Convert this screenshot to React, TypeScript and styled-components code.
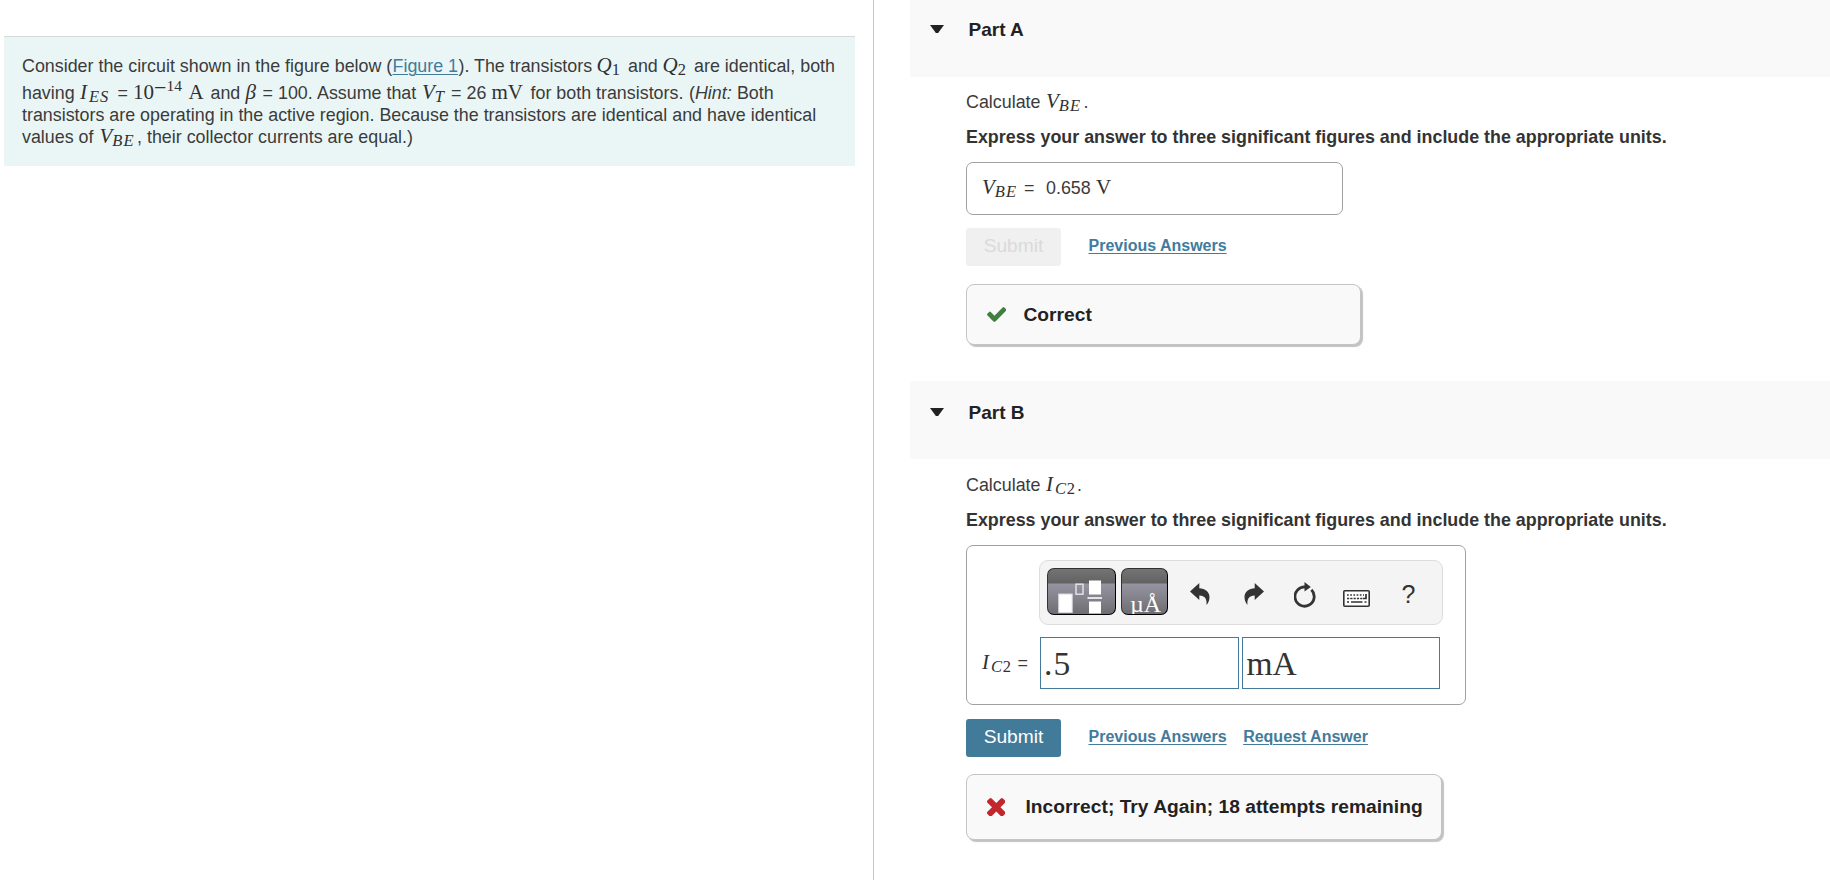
import React from "react";
import styled, { createGlobalStyle, css } from "styled-components";

const GlobalStyle = createGlobalStyle`
  * { box-sizing: border-box; }
  body { margin: 0; background: #fff; overflow: hidden; }
`;

const sans = `"Liberation Sans", Arial, sans-serif`;
const serif = `"Liberation Serif", "Times New Roman", serif`;

const Page = styled.div`
  display: grid;
  grid-template-columns: 873px 1px 1fr;
  height: 880px;
  font-family: ${sans};
  font-size: 17.86px;
  line-height: 22px;
  color: #3b3b3b;
`;

const Divider = styled.div`
  background: #bcc8d4;
`;

const LeftPane = styled.section`
  padding: 36px 18px 0 4px;
`;

const Problem = styled.div`
  height: 130px;
  padding: 18px 0 0 18px;
  border-top: 1px solid #d8dada;
  background: #eaf6f6;
`;

const Line = styled.div<{ $gap?: number }>`
  display: flex;
  align-items: baseline;
  height: 22px;
  margin-bottom: ${(p) => p.$gap ?? 0}px;
  white-space: pre;
`;

/* A run of words; $w is the advance to the next run on the line. */
const Run = styled.span<{ $w?: number; $italic?: boolean }>`
  flex: none;
  width: ${(p) => (p.$w ? `${p.$w}px` : "auto")};
  font-style: ${(p) => (p.$italic ? "italic" : "normal")};
`;

const Sym = styled.span<{ $w?: number; $upright?: boolean }>`
  flex: none;
  width: ${(p) => (p.$w ? `${p.$w}px` : "auto")};
  font-family: ${serif};
  font-size: 21px;
  line-height: 0;
  font-style: ${(p) => (p.$upright ? "normal" : "italic")};
  color: #303030;
`;

const Sub = styled.span<{ $upright?: boolean; $track?: number; $gap?: number }>`
  margin-left: ${(p) => p.$gap ?? 0}px;
  font-size: 16.5px;
  line-height: 0;
  vertical-align: -3px;
  letter-spacing: ${(p) => p.$track ?? 0}px;
  font-style: ${(p) => (p.$upright ? "normal" : "italic")};
`;

const Sup = styled.span`
  font-size: 15.5px;
  line-height: 0;
  vertical-align: 8px;
`;

const SupMinus = styled.span`
  font-size: 22px;
  line-height: 0;
  vertical-align: 4px;
`;

const FigureLink = styled.a`
  flex: none;
  width: 66px;
  color: #427b9b;
  text-decoration: underline;
  text-decoration-thickness: 1px;
  text-underline-offset: 2px;
`;

const RightPane = styled.main`
  padding-left: 36px;
`;

const PartHeader = styled.header<{ $height: number; $top: number }>`
  display: flex;
  align-items: flex-start;
  height: ${(p) => p.$height}px;
  padding: ${(p) => p.$top}px 0 0 20px;
  background: #f9f9f9;
`;

const Caret = styled.span`
  width: 14px;
  height: 8px;
  margin-top: 6px;
  background: #222;
  clip-path: polygon(0 0, 100% 0, 58% 100%, 42% 100%);
`;

const PartTitle = styled.h2`
  margin: 0 0 0 24.5px;
  font-size: 19px;
  line-height: 22px;
  color: #222;
`;

const PartBody = styled.div<{ $top: number; $height: number }>`
  height: ${(p) => p.$height}px;
  padding: ${(p) => p.$top}px 0 0 56px;
`;

const Instruction = styled.p`
  margin: 13px 0 0;
  font-weight: bold;
  color: #333;
  white-space: nowrap;
`;

const frame = css`
  border: 1px solid #a0a0a0;
  border-radius: 7px;
  background: #fff;
`;

const AnswerBox = styled.div`
  ${frame}
  width: 377px;
  height: 53px;
  margin-top: 14px;
  padding: 14px 0 0 15px;
`;

const EditorBox = styled.div`
  ${frame}
  width: 500px;
  height: 160px;
  margin-top: 14px;
  padding: 14px 0 0 15px;
`;

const Actions = styled.div<{ $top: number }>`
  display: flex;
  align-items: flex-start;
  margin-top: ${(p) => p.$top}px;
`;

const SubmitButton = styled.button`
  width: 95px;
  height: 38px;
  padding: 0;
  border: 0;
  border-radius: 3px;
  background: #427a9a;
  color: #fff;
  font: 19.2px/35px ${sans};
  padding-bottom: 3px;
  &:disabled {
    background: #f0f0f0;
    color: #dadada;
  }
`;

const ActionLink = styled.a<{ $left: number }>`
  margin: 7px 0 0 ${(p) => p.$left}px;
  font-size: 16px;
  font-weight: bold;
  color: #427b9b;
  text-decoration: underline;
  text-decoration-thickness: 1px;
  text-underline-offset: 2px;
`;

const Feedback = styled.div<{ $w: number; $h: number; $top: number }>`
  display: flex;
  align-items: center;
  width: ${(p) => p.$w}px;
  height: ${(p) => p.$h}px;
  margin-top: ${(p) => p.$top}px;
  padding-left: 19.5px;
  border: 1px solid #c4c4c4;
  border-radius: 8px;
  background: #f9f9f9;
  box-shadow: 2px 2px 1px #c2c2c2;
`;

const FeedbackText = styled.span<{ $left: number }>`
  margin-left: ${(p) => p.$left}px;
  font-size: 19.2px;
  font-weight: bold;
  letter-spacing: 0.03px;
  color: #222;
  white-space: nowrap;
`;

const Toolbar = styled.div`
  display: flex;
  align-items: flex-start;
  width: 404px;
  height: 65px;
  margin-left: 57px;
  padding: 7px 0 0 7px;
  border: 1px solid #dcdcdc;
  border-radius: 9px;
  background: #f4f4f4;
`;

const Palette = styled.button<{ $w: number }>`
  flex: none;
  width: ${(p) => p.$w}px;
  height: 47px;
  margin: 0 5px 0 0;
  padding: 0;
  overflow: hidden;
  border: 1px solid #333;
  border-right-color: #000;
  border-bottom-color: #000;
  border-radius: 7px;
  background: linear-gradient(#747474 0, #626262 14px, #9694a0 15px, #6e6d72 100%);
  color: #fff;
  font: 24px/24px ${serif};
  svg { display: block; }
`;

const UnitGlyphs = styled.span`
  display: block;
  padding: 23px 0 0 2px;
`;

const ToolIcon = styled.span<{ $left: number; $top: number }>`
  flex: none;
  margin: ${(p) => p.$top}px 0 0 ${(p) => p.$left}px;
  font-size: 25px;
  line-height: 26px;
  color: #333;
  svg { display: block; }
`;

const EntryRow = styled.div`
  display: flex;
  align-items: flex-start;
  padding-top: 12px;
`;

const EntryLabel = styled(Line)`
  flex: none;
  width: 58px;
  padding-top: 15px;
`;

const Entry = styled.div<{ $w: number; $pad: number; $track?: number }>`
  flex: none;
  width: ${(p) => p.$w}px;
  height: 52px;
  margin-right: 3px;
  padding-left: ${(p) => p.$pad}px;
  border: 1px solid #427b9b;
  font: 33.5px/51px ${serif};
  letter-spacing: ${(p) => p.$track ?? 0}px;
  color: #333;
`;

const CheckIcon = () => (
  <svg width="19.4" height="15" viewBox="121 334 1550 1188" fill="#3f8040">
    <path d="M1671 566q0 40-28 68l-724 724-136 136q-28 28-68 28t-68-28l-136-136-362-362q-28-28-28-68t28-68l136-136q28-28 68-28t68 28l294 295 656-657q28-28 68-28t68 28l136 136q28 28 28 68z" />
  </svg>
);

const CrossIcon = () => (
  <svg width="18.5" height="18.5" viewBox="302 366 1188 1188" fill="#c1272d">
    <path d="M1490 1322q0 40-28 68l-136 136q-28 28-68 28t-68-28l-294-294-294 294q-28 28-68 28t-68-28l-136-136q-28-28-28-68t28-68l294-294-294-294q-28-28-28-68t28-68l136-136q28-28 68-28t68 28l294 294 294-294q28-28 68-28t68 28l136 136q28 28 28 68t-28 68l-294 294 294 294q28 28 28 68z" />
  </svg>
);

const TemplatesIcon = () => (
  <svg width="67" height="45" viewBox="0 0 67 45">
    <rect x="10.7" y="25" width="13.5" height="18.5" fill="#fff" stroke="#d8d8dc" />
    <rect x="28" y="15.2" width="7" height="10" fill="none" stroke="#e0e0e4" strokeWidth="1.5" />
    <rect x="41" y="11.5" width="12" height="14" fill="#fff" />
    <rect x="39.500" y="28" width="14.500" height="2" fill="#e4e4e8" />
    <rect x="41" y="32.500" width="12" height="12" fill="#fff" />
  </svg>
);

const curl = "M0 8.5 9.3 0V5.2C15 5.4 19.5 8.5 19.5 14c0 3.2-1 5.8-3 8 .6-6-1.5-9.3-7.2-9.5V17Z";

const UndoIcon = () => (
  <svg width="20" height="23" viewBox="0 0 20 23" fill="#333"><path d={curl} /></svg>
);

const RedoIcon = () => (
  <svg width="20" height="23" viewBox="0 0 20 23" fill="#333"><path d={curl} transform="matrix(-1 0 0 1 20 0)" /></svg>
);

const ResetIcon = () => (
  <svg width="22" height="26" viewBox="0 0 22 26">
    <path d="M11.5 5A9.6 9.6 0 1 0 17.4 7.8" fill="none" stroke="#333" strokeWidth="2.8" />
    <path d="M10.5 0 16.8 4.9 10.5 9.5Z" fill="#333" />
  </svg>
);

const KeyboardIcon = () => (
  <svg width="27" height="17" viewBox="0 0 27 17">
    <rect x="0.8" y="0.8" width="25.4" height="15.4" rx="1" fill="#fff" stroke="#333" strokeWidth="1.6" />
    <g stroke="#333" strokeWidth="1.7">
      <path d="M4 5H21" strokeDasharray="1.7 1.5" />
      <path d="M4 8.5H20" strokeDasharray="2.2 1.1" />
      <path d="M20 8.5H23V4" fill="none" />
      <path d="M4 12H6M8 12H19.5M21.5 12H23.5" />
    </g>
  </svg>
);

const VBE = ({ w }: { w?: number }) => (
  <Sym $w={w}>V<Sub $track={1}>BE</Sub></Sym>
);

const IC2 = ({ w }: { w?: number }) => (
  <Sym $w={w}>I<Sub $gap={2} $track={0.8}>C</Sub><Sub $upright>2</Sub></Sym>
);

const prompt = "Express your answer to three significant figures and include the appropriate units.";

export default function App() {
  return (
    <>
      <GlobalStyle />
      <Page>
        <LeftPane>
          <Problem>
            <Line $gap={5}>
              <Run $w={370.5}>Consider the circuit shown in the figure below (</Run>
              <FigureLink>Figure 1</FigureLink>
              <Run $w={15.5}>).</Run>
              <Run $w={122.5}>The transistors</Run>
              <Sym $w={31.5}>Q<Sub $upright>1</Sub></Sym>
              <Run $w={34.5}>and</Run>
              <Sym $w={31.5}>Q<Sub $upright>2</Sub></Sym>
              <Run>are identical, both</Run>
            </Line>
            <Line>
              <Run $w={58}>having</Run>
              <Sym $w={37.5}>I<Sub $gap={2} $track={1}>ES</Sub></Sym>
              <Run $w={15.5}>=</Run>
              <Sym $w={55.5} $upright>10<SupMinus>−</SupMinus><Sup>14</Sup></Sym>
              <Sym $w={22} $upright>A</Sym>
              <Run $w={35}>and</Run>
              <Sym $w={17}>β</Sym>
              <Run $w={15.5}>=</Run>
              <Run $w={39}>100.</Run>
              <Run $w={105}>Assume that</Run>
              <Sym $w={29}>V<Sub>T</Sub></Sym>
              <Run $w={15.5}>=</Run>
              <Run $w={25}>26</Run>
              <Sym $w={39} $upright>mV</Sym>
              <Run $w={158.5}>for both transistors.</Run>
              <Run>(</Run>
              <Run $w={42} $italic>Hint:</Run>
              <Run>Both</Run>
            </Line>
            <Line>
              <Run>transistors are operating in the active region. Because the transistors are identical and have identical</Run>
            </Line>
            <Line>
              <Run $w={77.5}>values of</Run>
              <VBE w={37.5} />
              <Run>, their collector currents are equal.)</Run>
            </Line>
          </Problem>
        </LeftPane>
        <Divider />
        <RightPane>
          <PartHeader $height={77} $top={19}>
            <Caret />
            <PartTitle>Part A</PartTitle>
          </PartHeader>
          <PartBody $top={14} $height={304}>
            <Line><Run $w={80}>Calculate</Run><VBE w={37.5} /><Run>.</Run></Line>
            <Instruction>{prompt}</Instruction>
            <AnswerBox>
              <Line><VBE w={42} /><Run $w={22}>=</Run><Run $w={50}>0.658</Run><Sym $upright>V</Sym></Line>
            </AnswerBox>
            <Actions $top={13}>
              <SubmitButton disabled>Submit</SubmitButton>
              <ActionLink $left={27.5}>Previous Answers</ActionLink>
            </Actions>
            <Feedback $w={395} $h={61} $top={18}>
              <CheckIcon />
              <FeedbackText $left={17.5}>Correct</FeedbackText>
            </Feedback>
          </PartBody>
          <PartHeader $height={78} $top={21}>
            <Caret />
            <PartTitle>Part B</PartTitle>
          </PartHeader>
          <PartBody $top={15} $height={421}>
            <Line><Run $w={80}>Calculate</Run><IC2 w={31} /><Run>.</Run></Line>
            <Instruction>{prompt}</Instruction>
            <EditorBox>
              <Toolbar>
                <Palette $w={69} aria-label="Templates"><TemplatesIcon /></Palette>
                <Palette $w={47} aria-label="Units"><UnitGlyphs>µÅ</UnitGlyphs></Palette>
                <ToolIcon $left={17} $top={15}><UndoIcon /></ToolIcon>
                <ToolIcon $left={33.5} $top={15}><RedoIcon /></ToolIcon>
                <ToolIcon $left={30} $top={14}><ResetIcon /></ToolIcon>
                <ToolIcon $left={27.5} $top={21.5}><KeyboardIcon /></ToolIcon>
                <ToolIcon $left={31.5} $top={13}>?</ToolIcon>
              </Toolbar>
              <EntryRow>
                <EntryLabel><IC2 w={35.5} /><Run>=</Run></EntryLabel>
                <Entry $w={199} $pad={3} $track={1}>.5</Entry>
                <Entry $w={198} $pad={3.5}>mA</Entry>
              </EntryRow>
            </EditorBox>
            <Actions $top={14}>
              <SubmitButton>Submit</SubmitButton>
              <ActionLink $left={27.5}>Previous Answers</ActionLink>
              <ActionLink $left={16.5}>Request Answer</ActionLink>
            </Actions>
            <Feedback $w={476} $h={66} $top={17}>
              <CrossIcon />
              <FeedbackText $left={20.5}>Incorrect; Try Again; 18 attempts remaining</FeedbackText>
            </Feedback>
          </PartBody>
        </RightPane>
      </Page>
    </>
  );
}
